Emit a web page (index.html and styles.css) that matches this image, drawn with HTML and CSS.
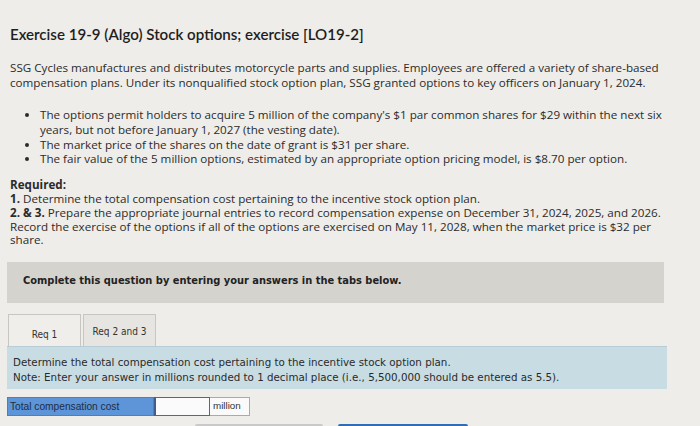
FILE: index.html
```html
<!DOCTYPE html>
<html>
<head>
<meta charset="utf-8">
<link rel="stylesheet" href="styles.css">
</head>
<body>
<div class="page">
  <h1 class="title">Exercise 19-9 (Algo) Stock options; exercise [LO19-2]</h1>
  <p class="intro">SSG Cycles manufactures and distributes motorcycle parts and supplies. Employees are offered a variety of share-based compensation plans. Under its nonqualified stock option plan, SSG granted options to key officers on January 1, 2024.</p>
  <ul class="facts">
    <li>The options permit holders to acquire 5 million of the company's $1 par common shares for $29 within the next six years, but not before January 1, 2027 (the vesting date).</li>
    <li>The market price of the shares on the date of grant is $31 per share.</li>
    <li>The fair value of the 5 million options, estimated by an appropriate option pricing model, is $8.70 per option.</li>
  </ul>
  <div class="required">
    <div class="req-head">Required:</div>
    <div><b>1.</b> Determine the total compensation cost pertaining to the incentive stock option plan.</div>
    <div><b>2. &amp; 3.</b> Prepare the appropriate journal entries to record compensation expense on December 31, 2024, 2025, and 2026. Record the exercise of the options if all of the options are exercised on May 11, 2028, when the market price is $32 per share.</div>
  </div>
  <div class="complete">Complete this question by entering your answers in the tabs below.</div>
  <div class="tabs">
    <div class="tab active">Req 1</div>
    <div class="tab">Req 2 and 3</div>
  </div>
  <div class="panel">
    <div>Determine the total compensation cost pertaining to the incentive stock option plan.</div>
    <div>Note: Enter your answer in millions rounded to 1 decimal place (i.e., 5,500,000 should be entered as 5.5).</div>
  </div>
  <div class="answer">
    <div class="label">Total compensation cost</div>
    <div class="input"></div>
    <div class="unit">million</div>
  </div>
  <div class="nav">
    <div class="nav-prev"></div>
    <div class="nav-next"></div>
  </div>
</div>
</body>
</html>
```

FILE: styles.css
```css
html, body {
  margin: 0;
  padding: 0;
  background: #eeede9;
}
.page {
  width: 700px;
  height: 426px;
  overflow: hidden;
  padding: 25px 0 0 0;
  box-sizing: border-box;
  font-family: "Open Sans", Lato, sans-serif;
  color: #2b2b2b;
}
.title {
  margin: 0 0 0 10px;
  font-family: Lato, sans-serif;
  font-size: 15.1px;
  font-weight: 600;
  line-height: 18px;
  color: #1e1e1e;
}
.intro {
  margin: 17px 0 0 10px;
  width: 666px;
  font-size: 11.65px;
  line-height: 15px;
}
.facts {
  margin: 18px 0 0 0;
  padding: 0 0 0 40px;
  width: 630px;
  font-size: 11.65px;
  line-height: 14.8px;
}
.required {
  margin: 11px 0 0 10px;
  width: 660px;
  font-size: 11.65px;
  line-height: 13.8px;
}
.req-head {
  font-weight: 700;
}
.complete {
  margin: 15px 0 0 7px;
  width: 657px;
  height: 41px;
  box-sizing: border-box;
  background: #d5d3ce;
  padding: 13px 0 0 16px;
  font-family: "DejaVu Sans", sans-serif;
  font-size: 9.9px;
  font-weight: 700;
  color: #222;
}
.tabs {
  display: flex;
  gap: 2px;
  margin: 11px 0 0 8px;
}
.tab {
  width: 73px;
  height: 32px;
  box-sizing: border-box;
  border: 1px solid #c8c6c1;
  border-bottom: none;
  background: #e6e5e1;
  display: flex;
  align-items: center;
  justify-content: center;
  font-family: "DejaVu Sans Condensed", "DejaVu Sans", sans-serif;
  font-size: 10px;
  color: #333;
  padding-top: 2px;
}
.tab.active {
  background: #efeeeb;
  padding-top: 8px;
}
.panel {
  margin: 0 0 0 7px;
  width: 660px;
  height: 43px;
  box-sizing: border-box;
  background: #c8dce4;
  border-top: 1px solid #b9ccd5;
  padding: 8px 0 0 6px;
  font-family: "DejaVu Sans", sans-serif;
  font-size: 10.3px;
  line-height: 14.5px;
  color: #2a2a2a;
}
.answer {
  display: flex;
  margin: 8px 0 0 7px;
  height: 19px;
}
.label {
  width: 147px;
  box-sizing: border-box;
  background: #5d95d8;
  border: 1px solid #4a7fc0;
  font-family: "Liberation Sans", Arial, sans-serif;
  font-size: 10.2px;
  line-height: 17px;
  padding-left: 2px;
  color: #1d2d44;
}
.input {
  width: 56px;
  box-sizing: border-box;
  background: #fbfbfb;
  border: 1px solid #666;
  border-left: 2px solid #3f5f8a;
}
.unit {
  width: 40px;
  box-sizing: border-box;
  background: #fafafa;
  border: 1px solid #aaa;
  border-left: none;
  font-family: "Liberation Sans", Arial, sans-serif;
  font-size: 9.8px;
  line-height: 15px;
  padding-left: 3px;
  color: #333;
}
.nav {
  display: flex;
  margin: 8px 0 0 195px;
  gap: 15px;
}
.nav-prev {
  width: 128px;
  height: 6px;
  background: #c9c9c9;
  border-radius: 2px 2px 0 0;
}
.nav-next {
  width: 130px;
  height: 6px;
  background: #2f6db5;
  border-radius: 2px 2px 0 0;
}
```
